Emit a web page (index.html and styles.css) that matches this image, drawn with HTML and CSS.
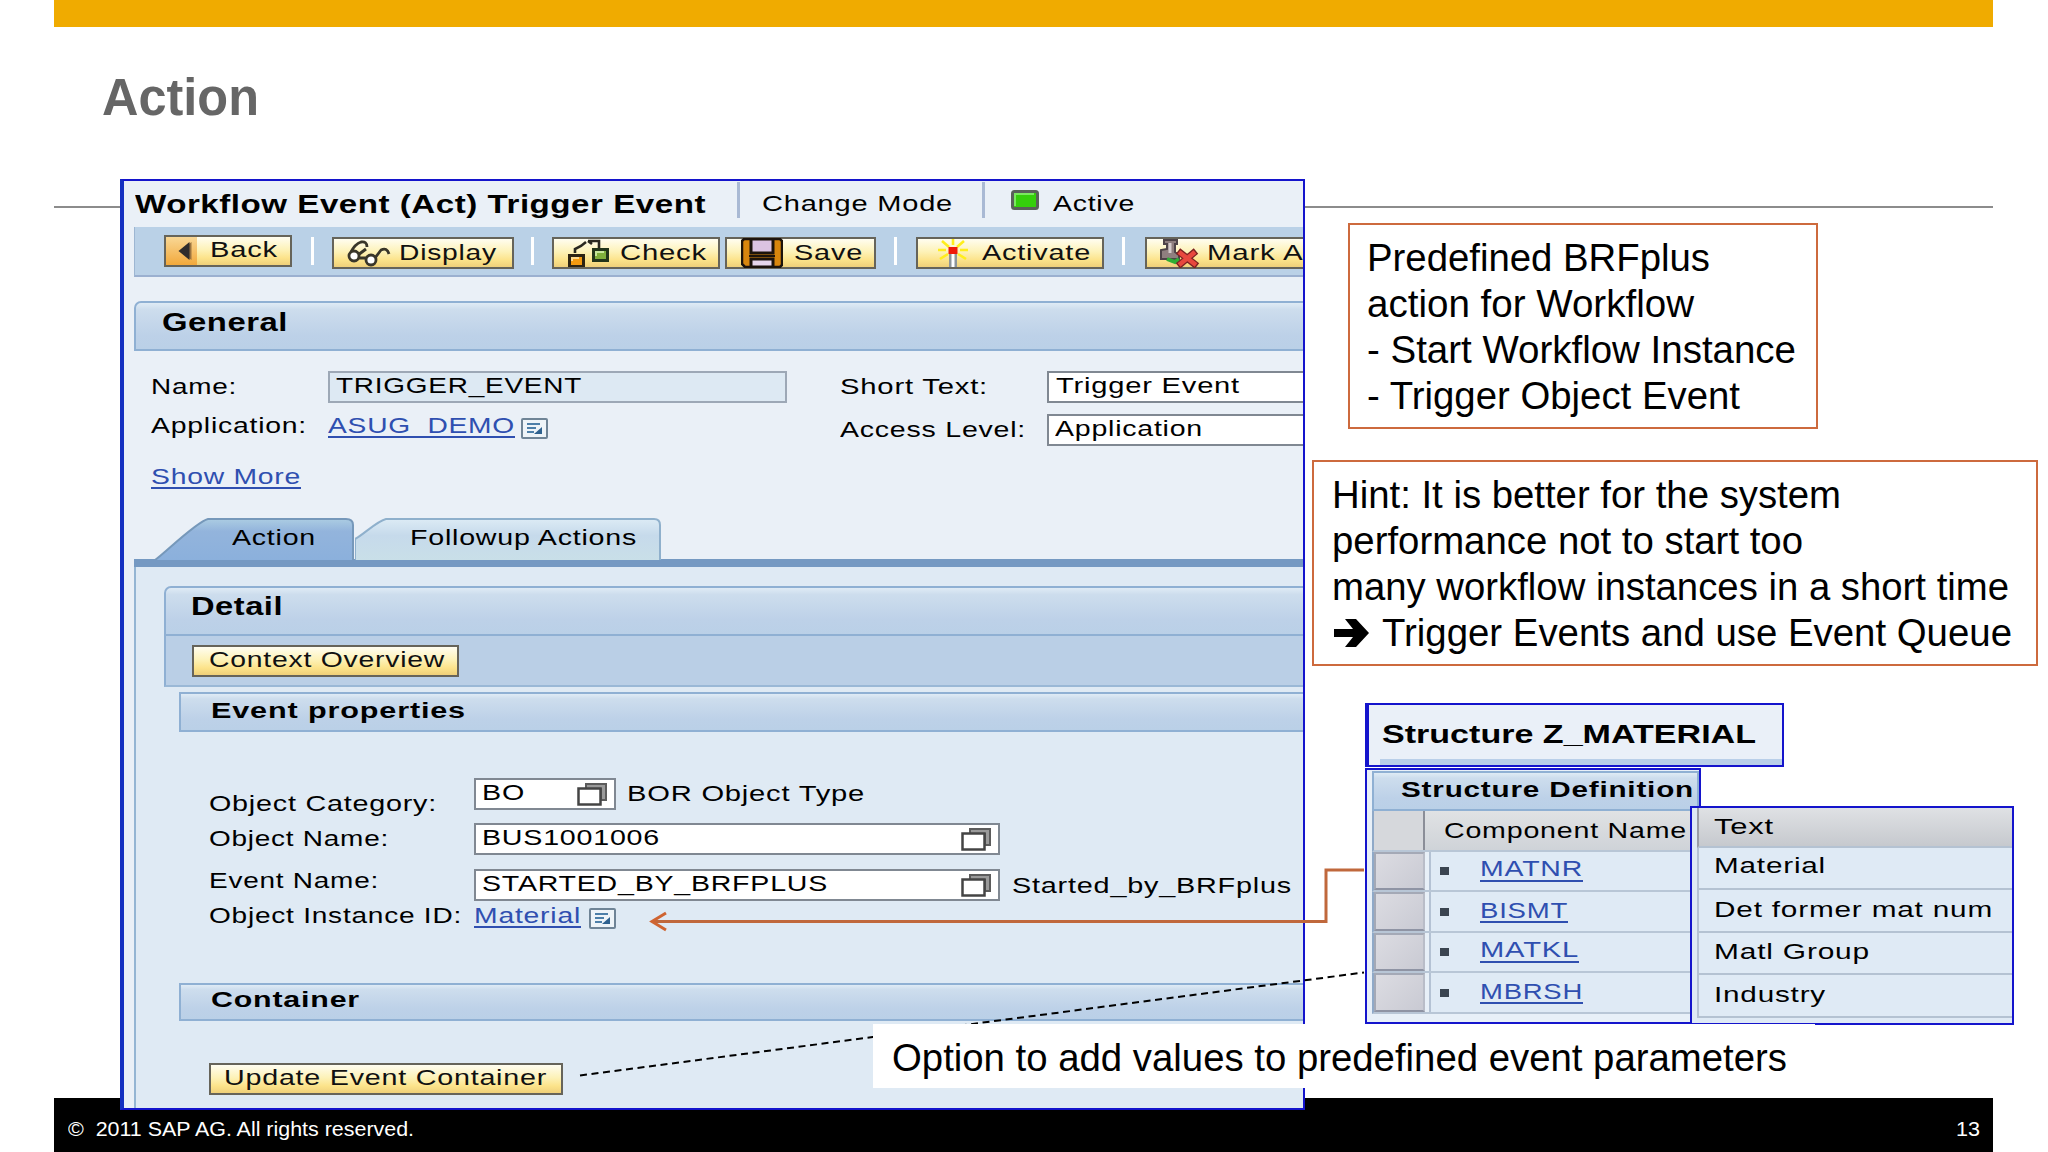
FILE: index.html
```html
<!DOCTYPE html>
<html>
    <head>
        <meta charset="utf-8">
        <title>Action</title>
        <link rel="stylesheet" href="styles.css">
    </head>
    <body>
        <svg class="defs">
            <symbol id="detail" viewBox="0 0 27 21">
                <rect x="1" y="1" width="25" height="19" rx="1" fill="#eef4f8" stroke="#6f8496" stroke-width="2"/>
                <path d="M6 6h13M6 10h9M6 14h7" stroke="#4d7fa8" stroke-width="2"/>
                <path d="M21 9v7h-8z" fill="#2f628f"/>
            </symbol>
            <symbol id="help" viewBox="0 0 30 23">
                <path d="M9 1h20v16h-5V6H9z" fill="#9a9a9a" stroke="#5c5c5c" stroke-width="2"/>
                <rect x="1.5" y="5.5" width="22" height="16" fill="#fff" stroke="#444" stroke-width="2.5"/>
            </symbol>
        </svg>

        <div class="slide">
            <div class="top-bar"></div>
            <h1 class="title"><span data-w="157">Action</span></h1>
            <div class="rule"></div>
            <div class="footer">
                <span data-w="346">©&nbsp; 2011 SAP AG. All rights reserved.</span>
                <span data-w="24">13</span>
            </div>

            <div class="panel">
                <div class="head">
                    <b class="big" data-w="571">Workflow Event (Act) Trigger Event</b>
                    <i class="bar bar1"></i>
                    <span class="mode" data-w="191">Change Mode</span>
                    <i class="bar bar2"></i>
                    <svg class="led" width="28" height="20" viewBox="0 0 28 20">
                        <rect x="1.5" y="1.5" width="25" height="17" rx="2" fill="#35cf0b" stroke="#596159" stroke-width="3"/>
                        <path d="M4 16V4h19" fill="none" stroke="#7be860" stroke-width="2"/>
                    </svg>
                    <span data-w="82">Active</span>
                </div>

                <div class="toolbar">
                    <button class="btn back">
                        <svg class="arrow" width="28" height="28" viewBox="0 0 28 28">
                            <path d="M24 5v18L12 14z" fill="#9a7440"/>
                            <path d="M22 5v18L11 14z" fill="#2f2c2c"/>
                        </svg>
                        <span data-w="68">Back</span>
                    </button>
                    <i class="sep sep1"></i>
                    <button class="btn display">
                        <svg width="46" height="28" viewBox="0 0 46 28">
                            <g fill="none" stroke="#39362a" stroke-width="2.8">
                                <path d="M5 13C8 7 12 4 15 3q6-1 6 5M29 19l6-8q6-3 8 4"/>
                                <path d="M12 16l8-6M13 19h7" stroke-width="3"/>
                                <ellipse cx="8" cy="17" rx="5" ry="5" fill="#fff"/>
                                <ellipse cx="25" cy="21" rx="5" ry="5" fill="#fff"/>
                            </g>
                        </svg>
                        <span data-w="98">Display</span>
                    </button>
                    <i class="sep sep2"></i>
                    <button class="btn check">
                        <svg width="42" height="28" viewBox="0 0 42 28">
                            <path d="M7 14V10l6-3 5-4M20 2h11v7M24 5l-4-3" fill="none" stroke="#2a2820" stroke-width="2.6"/>
                            <rect x="1.5" y="16.5" width="14" height="11" fill="#f39a10" stroke="#2d2412" stroke-width="3"/>
                            <path d="M4 22v-3h7" fill="none" stroke="#ffd98a" stroke-width="2"/>
                            <rect x="25.5" y="10.5" width="14" height="11" fill="#7fae3c" stroke="#22341a" stroke-width="3"/>
                            <path d="M28 17v-4h8" fill="none" stroke="#c6e59a" stroke-width="2"/>
                        </svg>
                        <span data-w="87">Check</span>
                    </button>
                    <button class="btn save">
                        <svg width="42" height="30" viewBox="0 0 42 30">
                            <path d="M1 3l2-2h36l2 2v24l-2 2H4l-3-3z" fill="#d8860d" stroke="#1c130c" stroke-width="2.5"/>
                            <rect x="10" y="1" width="22" height="14" fill="#dcc3e2" stroke="#1c130c" stroke-width="3"/>
                            <path d="M8 18h26" stroke="#1c130c" stroke-width="2"/>
                            <rect x="10" y="21" width="22" height="8" fill="#e6d6ec" stroke="#1c130c" stroke-width="3"/>
                        </svg>
                        <span data-w="69">Save</span>
                    </button>
                    <i class="sep sep3"></i>
                    <button class="btn activate">
                        <svg width="32" height="28" viewBox="0 0 32 28">
                            <path d="M16 0v6M5 2l7 6M27 2l-7 6M1 11h8M31 11h-8M3 20l8-5M29 20l-8-5" stroke="#ffee1c" stroke-width="2.6"/>
                            <rect x="12" y="15" width="8" height="13" fill="#8d959a"/>
                            <rect x="14.5" y="15" width="3" height="13" fill="#fff"/>
                            <rect x="11.5" y="8" width="9" height="7" fill="#f01808"/>
                        </svg>
                        <span data-w="109">Activate</span>
                    </button>
                    <i class="sep sep4"></i>
                    <button class="btn mark">
                        <svg width="40" height="29" viewBox="0 0 40 29">
                            <path d="M4 1h13v4h-2v8l4 3v4H1v-9l6-1V5H4z" fill="#8f7f7f" stroke="#4e4448" stroke-width="2"/>
                            <path d="M10 4v10" stroke="#d5cccc" stroke-width="3"/>
                            <path d="M7 20l8 3 4-3" stroke="#2fae34" stroke-width="4" fill="none"/>
                            <path d="M18 12l19 15M36 12L18 27" stroke="#7c2222" stroke-width="7"/>
                            <path d="M19 13l17 13M35 13L19 26" stroke="#e8483e" stroke-width="4.5"/>
                        </svg>
                        <span data-w="112">Mark As</span>
                    </button>
                </div>

                <div class="section general"><b class="big" data-w="126">General</b></div>

                <div class="form">
                    <div class="left">
                        <div class="row"><label data-w="86">Name:</label><div class="field ro"><span data-w="246">TRIGGER_EVENT</span></div></div>
                        <div class="row app"><label data-w="156">Application:</label><a data-w="187">ASUG_DEMO</a><svg class="det" width="27" height="21"><use href="#detail"/></svg></div>
                        <div class="row more"><a data-w="150">Show More</a></div>
                    </div>
                    <div class="right">
                        <div class="row"><label data-w="148">Short Text:</label><div class="field"><span data-w="184">Trigger Event</span></div></div>
                        <div class="row"><label data-w="186">Access Level:</label><div class="field app-level"><span data-w="148">Application</span></div></div>
                    </div>
                </div>

                <div class="tabs">
                    <div class="tab on">
                        <svg width="201" height="42" viewBox="0 0 201 42">
                            <defs><linearGradient id="g1" x1="0" y1="0" x2="0" y2="1"><stop offset="0" stop-color="#abcce2"/><stop offset=".3" stop-color="#93b4dc"/><stop offset="1" stop-color="#8bb0dc"/></linearGradient></defs>
                            <path d="M1 42C10 36 42 4 54 1H192q7 0 7 6V42" fill="url(#g1)" stroke="#7698ba" stroke-width="2"/>
                        </svg>
                        <span data-w="84">Action</span>
                    </div>
                    <div class="tab off">
                        <svg width="307" height="42" viewBox="0 0 307 42">
                            <defs><linearGradient id="g2" x1="0" y1="0" x2="0" y2="1"><stop offset="0" stop-color="#dcebf5"/><stop offset=".4" stop-color="#c6daeb"/><stop offset="1" stop-color="#c9dfe8"/></linearGradient></defs>
                            <path d="M0 42V21C8 17 22 3 31 1H299q6 0 6 6V42" fill="url(#g2)" stroke="#8fb0cc" stroke-width="2"/>
                        </svg>
                        <span data-w="227">Followup Actions</span>
                    </div>
                </div>

                <div class="content">
                    <div class="section detail"><b class="big" data-w="92">Detail</b></div>
                    <div class="subbar"><button class="btn ctx"><span data-w="236">Context Overview</span></button></div>
                    <div class="section sub"><b data-w="255">Event properties</b></div>

                    <div class="props">
                        <div class="row r1">
                            <label data-w="228">Object Category:</label>
                            <div class="field"><span data-w="43">BO</span><svg width="30" height="23"><use href="#help"/></svg></div>
                            <span class="desc" data-w="238">BOR Object Type</span>
                        </div>
                        <div class="row r2">
                            <label data-w="180">Object Name:</label>
                            <div class="field"><span data-w="178">BUS1001006</span><svg width="30" height="23"><use href="#help"/></svg></div>
                        </div>
                        <div class="row r3">
                            <label data-w="170">Event Name:</label>
                            <div class="field"><span data-w="346">STARTED_BY_BRFPLUS</span><svg width="30" height="23"><use href="#help"/></svg></div>
                            <span class="desc" data-w="280">Started_by_BRFplus</span>
                        </div>
                        <div class="row r4">
                            <label data-w="253">Object Instance ID:</label>
                            <a data-w="107">Material</a><svg class="det" width="27" height="21"><use href="#detail"/></svg>
                        </div>
                    </div>

                    <div class="section sub container"><b data-w="149">Container</b></div>
                    <button class="btn update"><span data-w="323">Update Event Container</span></button>
                </div>
            </div>

            <div class="callout predefined">
                <div data-w="343">Predefined BRFplus</div>
                <div data-w="327">action for Workflow</div>
                <div data-w="429">- Start Workflow Instance</div>
                <div data-w="373">- Trigger Object Event</div>
            </div>
            <div class="callout hint">
                <div data-w="509">Hint: It is better for the system</div>
                <div data-w="471">performance not to start too</div>
                <div data-w="677">many workflow instances in a short time</div>
                <div class="last">
                    <svg width="36" height="28" viewBox="0 0 36 28"><path d="M0 10h19L11 0h11l13 14-13 14H11l8-10H0z"/></svg>
                    <span data-w="630">Trigger Events and use Event Queue</span>
                </div>
            </div>

            <div class="struct-title">
                <b data-w="374">Structure Z_MATERIAL</b>
                <div class="strip"></div>
            </div>

            <div class="struct">
                <div class="section"><b data-w="293">Structure Definition</b></div>
                <div class="trow thead"><div class="sel"></div><div class="cell"><span data-w="243">Component Name</span></div></div>
                <div class="trow t1"><div class="sel"></div><div class="cell"><i class="dot"></i><a data-w="103">MATNR</a></div></div>
                <div class="trow t2"><div class="sel"></div><div class="cell"><i class="dot"></i><a data-w="88">BISMT</a></div></div>
                <div class="trow t3"><div class="sel"></div><div class="cell"><i class="dot"></i><a data-w="99">MATKL</a></div></div>
                <div class="trow t4"><div class="sel"></div><div class="cell"><i class="dot"></i><a data-w="103">MBRSH</a></div></div>
            </div>

            <div class="texts">
                <div class="th"><span data-w="60">Text</span></div>
                <div class="td d1"><span data-w="112">Material</span></div>
                <div class="td d2"><span data-w="279">Det former mat num</span></div>
                <div class="td d3"><span data-w="156">Matl Group</span></div>
                <div class="td d4"><span data-w="112">Industry</span></div>
            </div>

            <svg class="lines" width="2048" height="1152">
                <path d="M1364 870H1326V921.5H653" fill="none" stroke="#c0683c" stroke-width="3"/>
                <path d="M666 913L652 921.5L666 930" fill="none" stroke="#cf6431" stroke-width="3"/>
                <path d="M580 1075.5L1364 972.5" stroke="#000" stroke-width="2" stroke-dasharray="7 4.6"/>
            </svg>

            <div class="option"><span data-w="895">Option to add values to predefined event parameters</span></div>
        </div>
        <script src="script.js"></script>
    </body>
</html>
```
FILE: styles.css
```css
*{
    box-sizing: border-box;
}
body{
    margin: 0;
    background-color: white;
    font-family: "Liberation Sans", Arial, sans-serif;
    font-size: 22px;
    color: black;
    overflow: hidden;
}
.defs{
    display: none;
}
.slide{
    position: relative;
    width: 2048px;
    height: 1152px;
    overflow: hidden;
}
[data-w]{
    display: inline-block;
    white-space: nowrap;
    transform-origin: left center;
}
svg{
    display: block;
    flex: none;
}

/* slide frame */
.top-bar{
    height: 27px;
    margin: 0 55px 0 54px;
    background-color: #f0ab00;
}
.title{
    margin: 41px 0 0 102px;
    font-size: 51px;
    line-height: 60px;
    color: #666;
}
.rule{
    margin: 78px 55px 0 54px;
    height: 2px;
    background-color: #8c8c8c;
}
.footer{
    position: absolute;
    left: 54px;
    right: 55px;
    bottom: 0;
    height: 54px;
    padding: 8px 13px 0 14px;
    display: flex;
    justify-content: space-between;
    background-color: black;
    color: white;
    font-size: 20px;
    line-height: 46px;
}

/* workflow window */
.panel{
    position: absolute;
    left: 120px;
    top: 179px;
    width: 1185px;
    height: 931px;
    border: 2px solid #1414cc;
    border-left: 4px solid #1530c0;
    background-color: #eaf0f7;
    overflow: hidden;
}
.panel, .struct, .texts{
    letter-spacing: .6px;
}
.big{
    font-size: 25px;
    letter-spacing: .4px;
}
.head{
    height: 46px;
    padding-left: 11px;
    display: flex;
    align-items: center;
    line-height: 30px;
}
.head .big{
    padding-bottom: 1px;
}
.bar{
    align-self: flex-start;
    width: 3px;
    height: 36px;
    margin-top: 1px;
    background-color: #a9b9d4;
    flex: none;
}
.bar1{ margin-left: 31px; }
.mode{ margin-left: 22px; }
.bar2{ margin-left: 29px; }
.led{
    margin: 0 14px 8px 26px;
}
.toolbar{
    height: 50px;
    width: 1190px;
    margin-left: 10px;
    padding: 10px 0 0 29px;
    display: flex;
    align-items: flex-start;
    background-color: #bad1e7;
    border-left: 1px solid #9db6d2;
    border-bottom: 2px solid #9bb0d0;
}
.btn{
    flex: none;
    display: flex;
    align-items: center;
    height: 32px;
    padding: 0;
    border: 2px solid #66645a;
    background: linear-gradient(#fffdf0, #fdf2b8 45%, #fce38a 75%, #efd07a);
    font-family: inherit;
    font-size: 22px;
    line-height: 28px;
    letter-spacing: .6px;
    color: #111;
}
.back{
    width: 128px;
    margin-top: -2px;
}
.back span{
    margin-left: 13px;
    padding-bottom: 3px;
}
.arrow{
    background: linear-gradient(#f9d795, #f2a93c);
}
.back .arrow{ width: 31px; }
.sep{
    flex: none;
    width: 3px;
    height: 28px;
    background-color: white;
}
.sep1{ margin: 0 18px 0 19px; }
.sep2{ margin: 0 18px 0 17px; }
.sep3{ margin: 0 19px 0 18px; }
.sep4{ margin: 0 20px 0 18px; }
.display{
    width: 182px;
    padding-left: 12px;
}
.display span{ margin-left: 7px; }
.check{
    width: 168px;
    padding-left: 14px;
}
.check span{ margin-left: 10px; }
.save{
    width: 151px;
    margin-left: 5px;
    padding-left: 14px;
}
.save span{ margin-left: 11px; }
.activate{
    width: 188px;
    padding-left: 19px;
}
.activate span{ margin-left: 13px; }
.mark{
    width: 200px;
    padding-left: 13px;
}
.mark span{ margin-left: 7px; }

.section{
    display: flex;
    align-items: center;
    border: 2px solid #8fb0d3;
    background: linear-gradient(#dfebf5, #cddded 14%, #bdd1e8 70%, #bad0e7);
}
.general{
    width: 1190px;
    height: 50px;
    margin: 24px 0 0 10px;
    padding: 0 0 8px 26px;
    border-top-left-radius: 7px;
}
.form{
    display: flex;
    padding: 20px 0 0 27px;
    height: 167px;
}
.left{
    flex: none;
    width: 689px;
}
.right{
    flex: none;
    display: flex;
    flex-direction: column;
    gap: 11px;
}
.row{
    display: flex;
    height: 32px;
    line-height: 32px;
}
.app{
    margin-top: 6px;
    line-height: 33px;
}
.more{ margin-top: 20px; }
.row .field{
    display: flex;
    flex: none;
    width: 459px;
    height: 32px;
    padding-left: 6px;
    border: 2px solid #808892;
    background-color: white;
    line-height: 26px;
}
.row .ro{
    background-color: #dde9f3;
    border-color: #9da8b6;
}
.left .ro{ margin-left: auto; margin-right: 53px; }
.app a{ margin-left: 21px; }
.right .row{ width: 600px; }
.right .field{ margin-left: auto; margin-right: -66px; padding-left: 7px; }
.right .app-level{ padding-left: 6px; }
a{
    color: #2f4fb0;
    text-decoration: underline;
    text-decoration-thickness: 2px;
    text-decoration-skip-ink: none;
    text-underline-offset: 3px;
}
.det{
    margin: 9px 0 0 6px;
}

/* tabs */
.tabs{
    display: flex;
    width: 1190px;
    margin-left: 10px;
    padding-left: 20px;
    height: 49px;
    border-bottom: 8px solid #7599c2;
}
.tab{
    display: grid;
    justify-items: start;
    line-height: 39px;
}
.tab svg, .tab span{
    grid-area: 1 / 1;
}
.on span{ margin-left: 78px; }
.off span{ margin-left: 55px; }

.content{
    width: 1190px;
    height: 560px;
    margin-left: 10px;
    padding: 19px 0 0 28px;
    border-left: 2px solid #94b5d3;
    background-color: #dfeaf4;
}
.detail{
    height: 50px;
    padding: 0 0 9px 25px;
    border-top-left-radius: 7px;
}
.subbar{
    height: 51px;
    padding: 9px 0 0 26px;
    background-color: #bacfe6;
    border-left: 2px solid #8fb0d3;
    border-bottom: 2px solid #9ab8d6;
}
.ctx{
    width: 267px;
    padding: 0 0 3px 15px;
}
.sub{
    height: 40px;
    margin: 5px 0 0 15px;
    padding: 0 0 3px 30px;
}
.props{
    margin: 46px 0 0 45px;
}
.props .field{
    justify-content: space-between;
    align-items: center;
    padding-right: 7px;
}
.props .field span{
    padding-bottom: 2px;
}
.r1 .field{ margin-left: 37px; width: 142px; }
.r1 label{ margin-top: 10px; }
.r1 .desc{ margin-left: 11px; }
.r2{ margin-top: 13px; }
.r2 .field{ margin-left: 85px; width: 526px; }
.r3{ margin-top: 14px; }
.r3 label{ margin-top: -4px; }
.r3 .field{ margin-left: 95px; width: 526px; }
.r3 .desc{ margin-left: 12px; margin-top: 1px; }
.r4{ line-height: 29px; }
.r4 a{ margin-left: 12px; }
.r4 .det{ margin-top: 7px; margin-left: 8px; }
.container{
    height: 38px;
    margin-top: 50px;
    padding-bottom: 4px;
}
.update{
    width: 354px;
    margin: 42px 0 0 45px;
    padding: 0 0 2px 13px;
}

/* notes */
.callout{
    position: absolute;
    border: 2px solid #cd6a3d;
    background-color: white;
    font-size: 38px;
    line-height: 46px;
    display: flex;
    flex-direction: column;
    align-items: flex-start;
}
.predefined{
    left: 1348px;
    top: 223px;
    width: 470px;
    height: 206px;
    padding: 10px 0 0 17px;
}
.hint{
    left: 1312px;
    top: 460px;
    width: 726px;
    height: 206px;
    padding: 10px 0 0 18px;
}
.last{
    display: flex;
    align-items: center;
}
.last span{ margin-left: 12px; }
.last svg{ margin-left: 2px; }

/* structure tables */
.struct-title{
    position: absolute;
    left: 1365px;
    top: 703px;
    width: 419px;
    height: 64px;
    padding: 11px 0 0 13px;
    border: 2px solid #1414cc;
    border-left-width: 4px;
    background-color: #eaf0f8;
    font-size: 26px;
    line-height: 36px;
}
.strip{
    height: 6px;
    margin: 7px 0 0 -2px;
    background-color: #b9cfe9;
}
.struct{
    position: absolute;
    left: 1365px;
    top: 768px;
    width: 336px;
    height: 256px;
    padding: 1px 0 0 5px;
    border: 2px solid #1414cc;
    background-color: #e8f0f8;
    overflow: hidden;
}
.struct .section{
    height: 40px;
    padding: 0 0 2px 27px;
}
.trow{
    display: flex;
    border-bottom: 2px solid #b8c6d6;
    border-left: 2px solid #8fa9c8;
}
.sel{
    width: 51px;
    border: 2px solid #a4a9b6;
    border-right-color: #b9bdc8;
    border-bottom-color: #8f94a4;
    background: linear-gradient(135deg, #dcdce2, #c9cad3);
}
.cell{
    flex: 1;
    display: flex;
    align-items: center;
    margin-left: 4px;
    background-color: #dfeaf5;
    border-left: 2px solid #b4c2d4;
}
.thead{ height: 41px; }
.thead .sel{
    border: 0;
    border-right: 2px solid #8b8e98;
    background: #d6d8dc;
}
.thead .cell{
    margin: 0;
    border: 0;
    padding: 0 0 0 19px;
    background: linear-gradient(#e0e2e4, #cfd3d8);
}
.t1, .t3{ height: 40px; }
.t2, .t4{ height: 41px; }
.dot{
    width: 9px;
    height: 8px;
    margin-left: 9px;
    background-color: #3a4450;
}
.cell a{
    margin-left: 31px;
    padding-bottom: 2px;
    line-height: 26px;
}
.t1 a, .t3 a{ text-underline-offset: 4px; padding-bottom: 4px; }
.t4 a{ padding-bottom: 1px; }
.texts{
    position: absolute;
    left: 1690px;
    top: 806px;
    width: 324px;
    height: 219px;
    border: 2px solid #1414cc;
    background-color: #dfeaf5;
    line-height: 28px;
}
.th, .td{
    display: flex;
    align-items: center;
    padding-left: 15px;
    margin-left: 5px;
    border-left: 2px solid #b4c2d4;
    border-bottom: 2px solid #b4c2d2;
}
.th{
    height: 40px;
    padding-bottom: 1px;
    background: linear-gradient(#dfe1e4, #c6c9ce);
    border-left-color: #9a9da6;
}
.d1{ height: 42px; padding-bottom: 4px; }
.d2{ height: 43px; padding-bottom: 1px; }
.d3{ height: 42px; padding-bottom: 2px; }
.d4{ height: 43px; padding-bottom: 1px; }
.lines{
    position: absolute;
    left: 0;
    top: 0;
}
.option{
    position: absolute;
    left: 873px;
    top: 1024px;
    width: 942px;
    height: 64px;
    padding-left: 19px;
    background-color: white;
    font-size: 38px;
    line-height: 68px;
}
```
FILE: script.js
```js
// stretch every label to its own width
var labels = document.querySelectorAll('[data-w]');
for(var i=0;i<labels.length;i++){
    var w = Number(labels[i].getAttribute('data-w'));
    labels[i].style.flex = 'none';
    var real = labels[i].getBoundingClientRect().width;
    labels[i].style.transform = 'scaleX(' + w/real + ')';
    labels[i].style.marginRight = (w-real) + 'px';
}
```
